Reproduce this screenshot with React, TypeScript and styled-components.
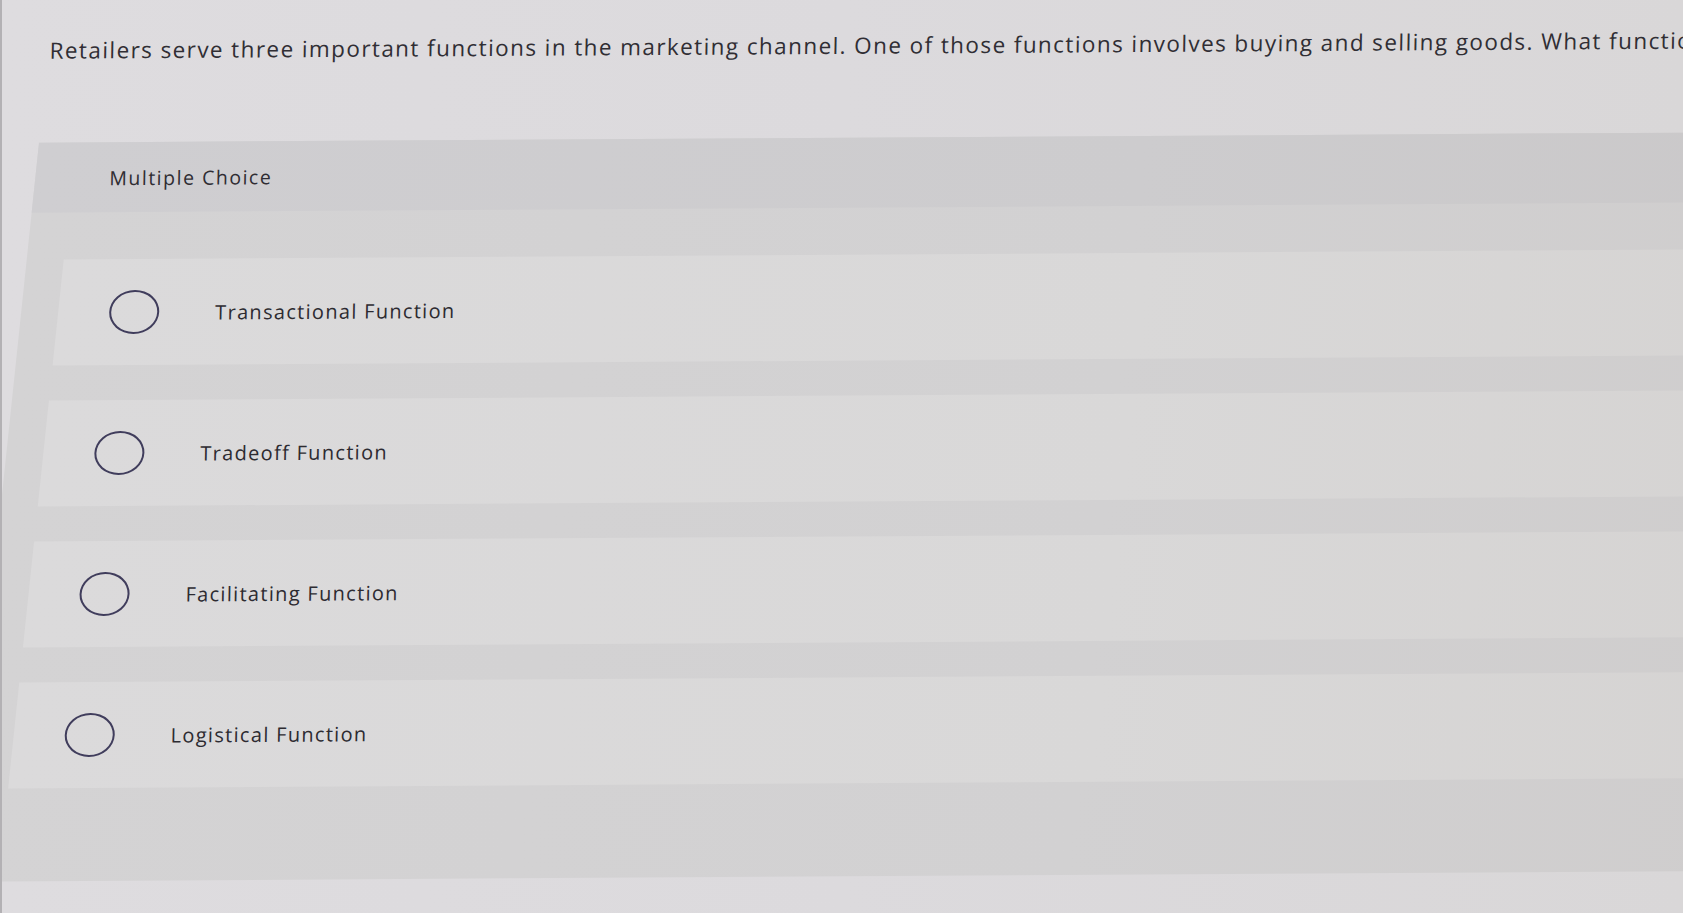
import React from "react";
import styled, { createGlobalStyle } from "styled-components";

const GlobalStyle = createGlobalStyle`
  html, body {
    margin: 0;
    padding: 0;
    background: #dcdbdc;
    overflow: hidden;
  }
  * { box-sizing: border-box; }
`;

const Page = styled.main`
  width: 100vw;
  height: 913px;
  overflow: hidden;
  background: linear-gradient(to right, #dedcdf 0%, #dcdadd 50%, #d9d7d8 100%);
  border-left: 2px solid #b3b1b4;
  font-family: "Open Sans", Lato, Arial, sans-serif;
  color: #2d2b31;
`;

const Scene = styled.div`
  display: flex;
  flex-direction: column;
  transform-origin: 0 0;
  transform: skewX(-6deg) skewY(-0.35deg);
  width: 1900px;
`;

const Upright = styled.span`
  display: inline-block;
  transform: skewX(5deg);
`;

const Question = styled.p`
  margin: 0;
  padding: 38px 0 0 53px;
  font-size: 22.5px;
  line-height: 26px;
  font-weight: 500;
  letter-spacing: 1.4px;
  white-space: nowrap;
  color: #302e34;
`;

const Panel = styled.section`
  margin: 79px 0 0 52px;
  width: 1840px;
  height: 739px;
  background: linear-gradient(to right, #d4d3d4 0%, #d2d1d2 60%, #cfcdcd 100%);
  display: flex;
  flex-direction: column;
`;

const PanelHeader = styled.header`
  height: 70px;
  display: flex;
  align-items: center;
  padding-left: 74px;
  background: linear-gradient(to right, #cfced1 0%, #cdccce 60%, #cac8c9 100%);
  font-size: 19.5px;
  font-weight: 500;
  letter-spacing: 1.5px;
  color: #2f2d33;
`;

const OptionList = styled.div`
  display: flex;
  flex-direction: column;
  gap: 35px;
  padding: 47px 0 0 37px;
`;

const Option = styled.label`
  height: 106px;
  display: flex;
  align-items: center;
  padding-left: 51px;
  background: linear-gradient(to right, #dbdadb 0%, #d9d8d8 60%, #d5d3d2 100%);
  cursor: pointer;
`;

const Radio = styled.span`
  flex: none;
  width: 50px;
  height: 44px;
  border: 2px solid #403d5c;
  border-radius: 50%;
  margin-right: 56px;
  transform: skewX(4deg);
`;

const OptionText = styled.span`
  display: inline-block;
  font-size: 20px;
  font-weight: 500;
  letter-spacing: 1.3px;
  color: #2d2b31;
  transform: skewX(5deg);
`;

const options = [
  "Transactional Function",
  "Tradeoff Function",
  "Facilitating Function",
  "Logistical Function",
];

export default function App() {
  return (
    <>
      <GlobalStyle />
      <Page>
        <Scene>
          <Question>
            <Upright>
              Retailers serve three important functions in the marketing channel. One of those functions
              involves buying and selling goods. What function is this?
            </Upright>
          </Question>
          <Panel>
            <PanelHeader>
              <Upright>Multiple Choice</Upright>
            </PanelHeader>
            <OptionList>
              {options.map((o) => (
                <Option key={o}>
                  <Radio />
                  <OptionText>{o}</OptionText>
                </Option>
              ))}
            </OptionList>
          </Panel>
        </Scene>
      </Page>
    </>
  );
}
